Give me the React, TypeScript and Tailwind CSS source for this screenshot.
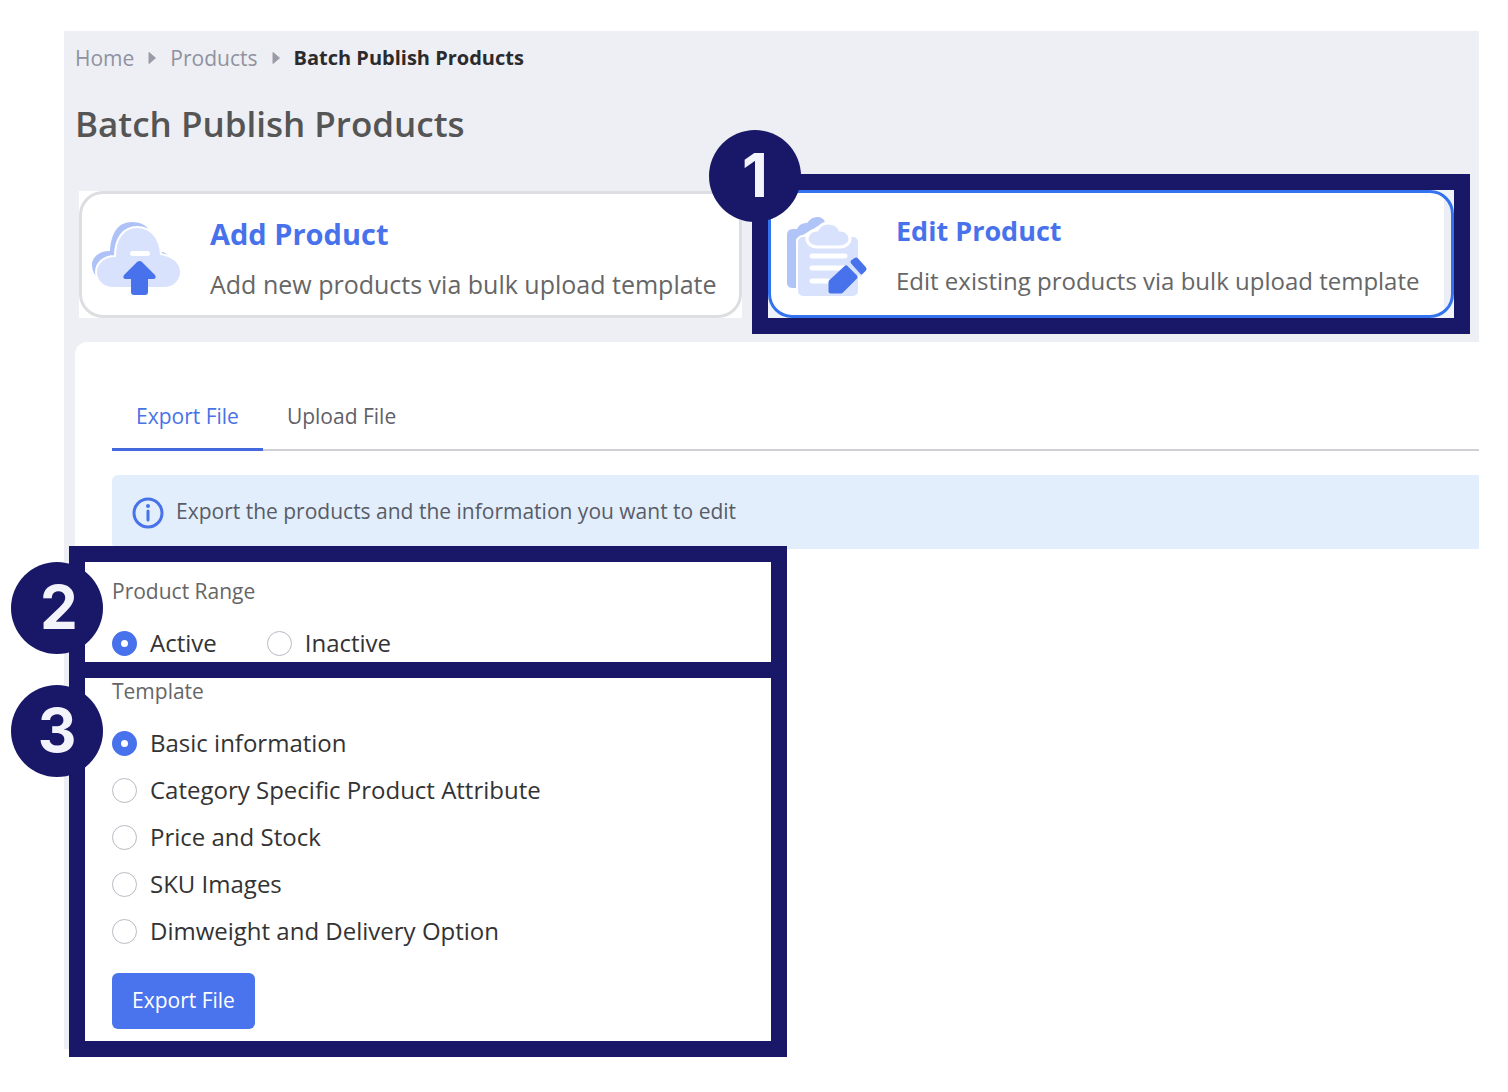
import { useState, type ReactNode } from "react";

function Badge({ children, className }: { children: ReactNode; className: string }) {
  return (
    <span
      className={`absolute z-10 flex size-[92px] items-center justify-center rounded-full bg-[#191767] pb-[2px] font-['Inter',sans-serif] text-[60px] leading-none font-bold text-[#f3f4fb] ${className}`}
    >
      {children}
    </span>
  );
}

function CloudIcon() {
  return (
    <svg viewBox="0 0 88 80" className="w-[88px] shrink-0" aria-hidden="true">
      <path
        d="M8 62C3 58 0 53 0 47c0-8 7-14 18-14C19 15 26 4 40 4c8 0 14 3 18 9l12 21c5 1 7 4 9 9L60 56z"
        fill="#aec2f8"
      />
      <path
        d="M22 70C11 70 4 63 4 54c0-9 8-16 19-16C23 21 31 9 45 9c14 0 23 11 24 27 12 2 20 9 20 18 0 9-7 16-18 16z"
        fill="#d9e2fd"
        stroke="#fff"
        strokeWidth="2"
      />
      <rect x="38" y="33" width="20" height="5" rx="2.5" fill="#fff" />
      <path
        d="M45 44q3-2 5 0l13 13q2 4-2 4h-5v13q0 3-3 3H42q-3 0-3-3V61h-5q-4 0-2-4z"
        fill="#4872ec"
      />
    </svg>
  );
}

function ClipboardIcon() {
  return (
    <svg viewBox="0 -2 80 80" className="w-20 shrink-0 overflow-visible" aria-hidden="true">
      <path
        d="M7 71Q1 71 1 66V18q0-6 6-6h4c2-4 5-6 10-6 3-4 6-6 10-6 4 0 7 2 8 5L10 22v49z"
        fill="#b1c4f8"
      />
      <rect x="11" y="19" width="62" height="61" rx="6" fill="#d9e2fd" stroke="#fff" strokeWidth="2" />
      <path
        d="M31 30c-6 0-10-4-10-8 0-5 4-9 10-9 3-5 6-7 11-7s10 2 12 7c6 0 10 4 10 9 0 4-4 8-10 8z"
        fill="#d9e2fd"
        stroke="#fff"
        strokeWidth="3"
      />
      <path d="M26 39h33M26 51h33M26 64h16" stroke="#fff" strokeWidth="5" strokeLinecap="round" />
      <path
        d="M45 65 60 51l9 9-14 14H45z"
        fill="#4872ec"
        stroke="#4872ec"
        strokeWidth="5"
        strokeLinejoin="round"
      />
      <path
        d="M67 45l3-2 8 9-3 3z"
        fill="#4872ec"
        stroke="#4872ec"
        strokeWidth="5"
        strokeLinejoin="round"
      />
      <path d="M62 45l13 14" stroke="#d9e2fd" strokeWidth="2" />
    </svg>
  );
}

function InfoIcon() {
  return (
    <svg viewBox="0 0 32 32" className="w-8 shrink-0 overflow-visible" fill="none" aria-hidden="true">
      <circle cx="16" cy="17" r="14" stroke="#4872e8" strokeWidth="3" />
      <circle cx="16" cy="10" r="2" fill="#4872e8" />
      <path d="M16 15v9" stroke="#4872e8" strokeWidth="3" strokeLinecap="round" />
    </svg>
  );
}

function Separator() {
  return (
    <svg viewBox="0 0 8 12" className="w-2" aria-hidden="true">
      <path d="M1 0.500v11L7.500 6z" fill="#999ca8" stroke="#999ca8" strokeLinejoin="round" />
    </svg>
  );
}

function RadioOption({
  name,
  label,
  checked,
  onSelect,
}: {
  name: string;
  label: string;
  checked: boolean;
  onSelect: () => void;
}) {
  return (
    <label className="flex h-8 items-center gap-[13px] text-2xl text-[#333]">
      <input
        type="radio"
        name={name}
        checked={checked}
        onChange={onSelect}
        className="size-[25px] shrink-0 appearance-none rounded-full border border-[#b9bbc4] bg-white checked:border-9 checked:border-[#4872ec]"
      />
      {label}
    </label>
  );
}

const ranges = ["Active", "Inactive"];
const templates = [
  "Basic information",
  "Category Specific Product Attribute",
  "Price and Stock",
  "SKU Images",
  "Dimweight and Delivery Option",
];

export default function App() {
  const [tab, setTab] = useState("Export File");
  const [range, setRange] = useState(ranges[0]);
  const [template, setTemplate] = useState(templates[0]);

  return (
    <div className="bg-white pt-[31px] pr-[29px] pb-[43px] pl-16 font-['Open_Sans','Noto_Sans',sans-serif]">
      <main className="flow-root bg-[#eeeff4] pt-[13px]">
        <nav
          aria-label="Breadcrumb"
          className="flex items-center gap-[14px] pl-[11px] text-[21px] leading-7 text-[#8f929f]"
        >
          <a href="#home">Home</a>
          <Separator />
          <a href="#products">Products</a>
          <Separator />
          <span className="text-xl font-bold text-[#2b2b2d]">Batch Publish Products</span>
        </nav>
        <h1 className="mt-7 pl-[11px] text-[35px] leading-12 font-semibold text-[#555]">
          Batch Publish Products
        </h1>

        <div className="mt-[26px] grid grid-cols-[663fr_718fr] gap-[10px] pr-[9px] pl-[15px]">
          <div className="mt-[17px] mb-4 bg-white">
            <button
              type="button"
              className="flex h-full w-full items-center gap-[30px] rounded-3xl border-3 border-[#dddee2] bg-white pt-[6px] pl-[10px] text-left"
            >
              <CloudIcon />
              <span className="whitespace-nowrap">
                <span className="block text-[29px] leading-9 font-bold text-[#4872ec]">Add Product</span>
                <span className="mt-4 block text-[25px] leading-8 text-[#666]">
                  Add new products via bulk upload template
                </span>
              </span>
            </button>
          </div>
          <div className="relative border-16 border-[#191767] bg-[#f1f3fa]">
            <Badge className="-top-[60px] -left-[59px]">1</Badge>
            <button
              type="button"
              className="flex h-32 w-full items-center gap-[30px] rounded-3xl border-3 border-[#3373ee] bg-[linear-gradient(to_left,#eceef5_7px,white_7px)] pt-[2px] pl-[15px] text-left"
            >
              <ClipboardIcon />
              <span className="whitespace-nowrap">
                <span className="block text-[27px] leading-9 font-bold text-[#4872ec]">Edit Product</span>
                <span className="mt-4 block text-2xl leading-8 text-[#666]">
                  Edit existing products via bulk upload template
                </span>
              </span>
            </button>
          </div>
        </div>

        <div className="mt-2 ml-[11px] flow-root rounded-tl-xl bg-white pt-[50px] pl-[37px]">
          <div role="tablist" className="flex border-b-2 border-[#cfd0d6]">
            {["Export File", "Upload File"].map((name) => (
              <button
                key={name}
                type="button"
                role="tab"
                aria-selected={tab === name}
                onClick={() => setTab(name)}
                className="-mb-[2px] border-b-3 border-transparent px-6 pt-[10px] pb-[18px] text-[21px] leading-7 text-[#5f6068] aria-selected:border-[#4469dc] aria-selected:text-[#4872e8]"
              >
                {name}
              </button>
            ))}
          </div>

          <div className="mt-6 flex h-[74px] items-center gap-3 rounded-l-md bg-[#e3eefd] pl-5 text-[21px] text-[#585c66]">
            <InfoIcon />
            Export the products and the information you want to edit
          </div>

          <form
            onSubmit={(e) => e.preventDefault()}
            className="relative -mt-[3px] -mb-2 -ml-[43px] max-w-[718px] border-16 border-[#191767] bg-white"
          >
            <fieldset className="relative px-[27px] pt-[17px] pb-[3px]">
              <legend className="float-left w-full pb-6 text-[21px] leading-6 text-[#666]">Product Range</legend>
              <Badge className="top-0 -left-[74px] pl-1">2</Badge>
              <div className="clear-both flex gap-[50px]">
                {ranges.map((r) => (
                  <RadioOption key={r} name="range" label={r} checked={range === r} onSelect={() => setRange(r)} />
                ))}
              </div>
            </fieldset>
            <fieldset className="relative border-t-16 border-[#191767] px-[27px] pt-px pb-3">
              <legend className="float-left w-full pb-6 text-[21px] leading-6 text-[#666]">Template</legend>
              <Badge className="top-[7px] -left-[74px]">3</Badge>
              <div className="clear-both flex flex-col gap-[15px]">
                {templates.map((t) => (
                  <RadioOption
                    key={t}
                    name="template"
                    label={t}
                    checked={template === t}
                    onSelect={() => setTemplate(t)}
                  />
                ))}
              </div>
              <button type="submit" className="mt-[26px] h-14 rounded-md bg-[#4a74ed] px-5 text-[21px] text-white">
                Export File
              </button>
            </fieldset>
          </form>
        </div>
      </main>
    </div>
  );
}
